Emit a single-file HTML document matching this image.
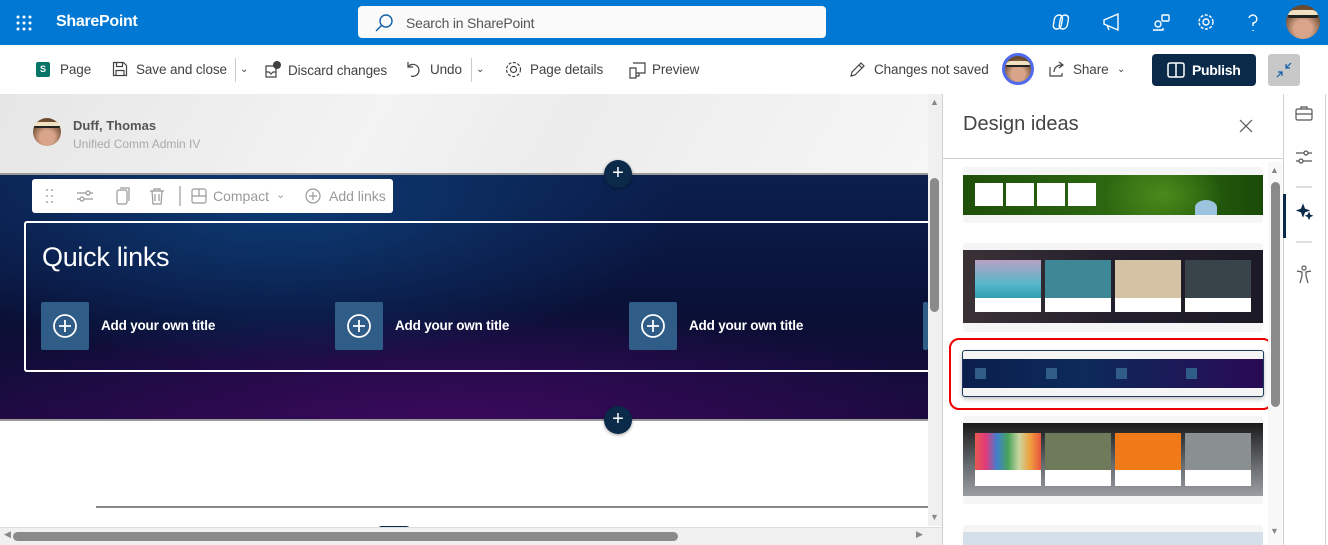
<!DOCTYPE html>
<html><head><meta charset="utf-8"><style>
*{box-sizing:border-box;margin:0;padding:0}
body{width:1328px;height:545px;overflow:hidden;font-family:"Liberation Sans",sans-serif;background:#fff;position:relative;color:#323130}
.abs{position:absolute}
.top{left:0;top:0;width:1328px;height:45px;background:#0078d4}
.tb{font-size:13.5px;color:#424242;top:62px;white-space:nowrap;letter-spacing:-0.1px}
.ico{stroke:#424242;fill:none;stroke-width:1.2}
.ql{width:48px;height:48px;background:#2f5d88;border-radius:2px}
.qlt{color:#fff;font-weight:bold;font-size:13.5px;letter-spacing:-0.2px}
.plus{width:28px;height:28px;border-radius:50%;background:#0b2a4a;color:#fff;text-align:center;line-height:27px;font-size:20px;box-shadow:0 1px 3px rgba(0,0,0,.4)}
.card{left:963px;width:300px;background:#f5f5f5;border-radius:3px}
.mini{background:#fff;position:absolute}
</style></head><body>
<div class="abs top"></div>
<svg class="abs" style="left:15px;top:14px" width="18" height="18"><g fill="#fff"><circle cx="3" cy="3" r="1.5"/><circle cx="9" cy="3" r="1.5"/><circle cx="15" cy="3" r="1.5"/><circle cx="3" cy="9" r="1.5"/><circle cx="9" cy="9" r="1.5"/><circle cx="15" cy="9" r="1.5"/><circle cx="3" cy="15" r="1.5"/><circle cx="9" cy="15" r="1.5"/><circle cx="15" cy="15" r="1.5"/></g></svg>
<div class="abs" style="left:56px;top:13px;color:#fff;font-weight:bold;font-size:16px;letter-spacing:-0.3px">SharePoint</div>
<div class="abs" style="left:358px;top:6px;width:468px;height:32px;background:#fafafa;border-radius:4px"></div>
<svg class="abs" style="left:374px;top:13px" width="20" height="20"><circle cx="12" cy="8" r="6" stroke="#0f5ea8" fill="none" stroke-width="1.4"/><path d="M8 12L2 18" stroke="#0f5ea8" stroke-width="1.4"/></svg>
<div class="abs" style="left:406px;top:15px;font-size:14px;color:#555;letter-spacing:-0.2px">Search in SharePoint</div>
<svg class="abs" style="left:1052px;top:10px" width="240" height="26" fill="none" stroke="#fff" stroke-width="1.4">
<rect x="4" y="5" width="8" height="14" rx="4" transform="skewX(-10)"/><rect x="10" y="5" width="8" height="14" rx="4" transform="skewX(-10)"/>
<path d="M52 10l14-6v16l-14-6zM52 10v4M55 15l2 5"/>
<circle cx="106" cy="14" r="3"/><rect x="110" y="5" width="7" height="6" rx="1"/><path d="M101 20h10v-2"/>
<circle cx="154" cy="12" r="3"/><circle cx="154" cy="12" r="7" stroke-dasharray="3 1.5"/>
<path d="M197 8a4 4 0 1 1 4 5v3M201 20v1"/>
</svg>
<div class="abs" style="left:1286px;top:5px;width:34px;height:34px;border-radius:50%;background:radial-gradient(circle at 50% 70%,#d9a58a 30%,#6b4a30 70%)"><div style="margin:5px 2px;height:8px;background:#f0e2c0;border-radius:6px 6px 2px 2px;border-bottom:3px solid #222"></div></div>

<!-- toolbar -->
<div class="abs" style="left:36px;top:62px;width:14px;height:15px;background:#077568;border-radius:2px;color:#fff;font-size:9px;font-weight:bold;text-align:center;line-height:15px">S</div>
<div class="abs tb" style="left:60px">Page</div>
<svg class="abs" style="left:112px;top:61px" width="16" height="16"><path class="ico" d="M1.5 1.5h10l3 3v10h-13zM4.5 1.5v4h6v-4M4 14.5v-5h8v5"/></svg>
<div class="abs tb" style="left:136px">Save and close</div>
<div class="abs" style="left:235px;top:58px;width:1px;height:24px;background:#ccc"></div>
<div class="abs tb" style="left:240px;font-size:10px;top:64px">⌄</div>
<svg class="abs" style="left:264px;top:60px" width="18" height="18"><path class="ico" d="M2 6h10v11h-10zM2 12h3l2 2 2-2h3"/><circle cx="13" cy="5" r="4" fill="#424242"/></svg>
<div class="abs tb" style="left:288px;top:63px">Discard changes</div>
<svg class="abs" style="left:405px;top:60px" width="18" height="18"><path class="ico" d="M3 2v5h5M3 7a6 6 0 1 1 3 9"/></svg>
<div class="abs tb" style="left:430px">Undo</div>
<div class="abs" style="left:471px;top:58px;width:1px;height:24px;background:#ccc"></div>
<div class="abs tb" style="left:476px;font-size:10px;top:64px">⌄</div>
<svg class="abs" style="left:505px;top:61px" width="17" height="17"><circle class="ico" cx="8.5" cy="8.5" r="3"/><circle class="ico" cx="8.5" cy="8.5" r="7" stroke-dasharray="3 1.6"/></svg>
<div class="abs tb" style="left:530px">Page details</div>
<svg class="abs" style="left:629px;top:61px" width="18" height="18"><path class="ico" d="M4 2h12v10h-9M1 7h6v10h-6zM10 12v3h-3"/></svg>
<div class="abs tb" style="left:652px">Preview</div>
<svg class="abs" style="left:848px;top:60px" width="18" height="18"><path class="ico" d="M3 16l1-4 9-9 3 3-9 9zM11 5l3 3"/></svg>
<div class="abs tb" style="left:874px">Changes not saved</div>
<div class="abs" style="left:1002px;top:53px;width:32px;height:32px;border-radius:50%;border:3px solid #4f6bed;background:radial-gradient(circle at 50% 70%,#d9a58a 30%,#6b4a30 70%)"><div style="margin:5px 1px;height:6px;background:#f0e2c0;border-radius:5px 5px 2px 2px;border-bottom:2px solid #222"></div></div>
<svg class="abs" style="left:1048px;top:60px" width="18" height="18"><path class="ico" d="M2 7v9h12v-3M6 12c0-5 4-7 8-7M11 2l4 3-4 3"/></svg>
<div class="abs tb" style="left:1073px">Share</div>
<div class="abs tb" style="left:1117px;font-size:10px;top:64px">⌄</div>
<div class="abs" style="left:1152px;top:54px;width:104px;height:32px;background:#0b2a4a;border-radius:4px;color:#fff;font-weight:bold;font-size:14px;line-height:32px;padding-left:40px;letter-spacing:-0.3px">Publish</div>
<svg class="abs" style="left:1167px;top:62px" width="18" height="16"><rect x="1" y="1" width="16" height="14" rx="2" stroke="#fff" fill="none" stroke-width="1.5"/><path d="M9 1v14" stroke="#fff" stroke-width="1.5"/></svg>
<div class="abs" style="left:1268px;top:54px;width:32px;height:32px;background:#c8c8c8;border-radius:3px"></div>
<svg class="abs" style="left:1276px;top:62px" width="16" height="16" stroke="#0f5ea8" fill="none" stroke-width="1.2"><path d="M15 1l-5 5M10 2v4h4M1 15l5-5M2 10h4v4"/></svg>

<!-- canvas -->
<div class="abs" style="left:0;top:94px;width:928px;height:80px;background:linear-gradient(120deg,#e6e6e6,#f3f3f3 40%,#ececec 60%,#f6f6f6)"></div>
<div class="abs" style="left:33px;top:118px;width:28px;height:28px;border-radius:50%;background:radial-gradient(circle at 50% 70%,#d9a58a 30%,#6b4a30 70%)"><div style="margin:4px 1px;height:6px;background:#f0e2c0;border-radius:5px 5px 2px 2px;border-bottom:2px solid #222"></div></div>
<div class="abs" style="left:73px;top:118px;font-size:13px;font-weight:bold;color:#555">Duff, Thomas</div>
<div class="abs" style="left:73px;top:137px;font-size:12px;color:#aaa">Unified Comm Admin IV</div>
<div class="abs" style="left:0;top:173px;width:928px;height:2px;background:#999"></div>
<div class="abs" style="left:0;top:175px;width:928px;height:244px;background:radial-gradient(ellipse 400px 160px at 280px 30px,#0c3a72,transparent),radial-gradient(ellipse 500px 120px at 450px 250px,#3a0a5c,transparent),linear-gradient(180deg,#0b1f4d,#0a0f35 60%,#1d0a40)"></div>
<div class="abs" style="left:0;top:419px;width:928px;height:2px;background:#999"></div>
<div class="abs" style="left:32px;top:179px;width:361px;height:34px;background:#fff;border-radius:3px"></div>
<svg class="abs" style="left:40px;top:186px" width="350" height="20" fill="none" stroke="#999" stroke-width="1.2">
<g fill="#aaa" stroke="none"><circle cx="7" cy="4" r="1"/><circle cx="12" cy="4" r="1"/><circle cx="7" cy="10" r="1"/><circle cx="12" cy="10" r="1"/><circle cx="7" cy="16" r="1"/><circle cx="12" cy="16" r="1"/></g>
<path d="M37 7h16M37 13h16"/><circle cx="48" cy="7" r="2" fill="#fff"/><circle cx="42" cy="13" r="2" fill="#fff"/>
<rect x="77" y="4" width="10" height="14" rx="2"/><path d="M80 2h9v13"/>
<path d="M110 5h14M114 5v-2h6v2M112 5l1 13h8l1-13M115 8v7M119 8v7"/>
<path d="M140 -6v34"/>
<rect x="152" y="3" width="14" height="14" rx="2"/><path d="M152 10h14M159 3v7"/>
<circle cx="273" cy="10" r="7"/><path d="M273 6v8M269 10h8"/>
</svg>
<div class="abs" style="left:213px;top:188px;font-size:14px;color:#999">Compact</div>
<div class="abs" style="left:276px;top:188px;font-size:11px;color:#999">⌄</div>
<div class="abs" style="left:329px;top:188px;font-size:14px;color:#999">Add links</div>
<div class="abs" style="left:24px;top:221px;width:910px;height:151px;border:2px solid #fff;border-right:none;border-radius:3px 0 0 3px"></div>
<div class="abs" style="left:42px;top:242px;color:#fff;font-size:27px;letter-spacing:-0.3px">Quick links</div>
<div class="abs ql" style="left:41px;top:302px"></div>
<div class="abs ql" style="left:335px;top:302px"></div>
<div class="abs ql" style="left:629px;top:302px"></div>
<div class="abs ql" style="left:923px;top:302px;width:5px"></div>
<svg class="abs" style="left:41px;top:302px" width="650" height="48" fill="none" stroke="#fff" stroke-width="1.8"><g id="p"><circle cx="24" cy="24" r="11"/><path d="M24 18v12M18 24h12"/></g><use href="#p" x="294"/><use href="#p" x="588"/></svg>
<div class="abs qlt" style="left:101px;top:318px">Add your own title</div>
<div class="abs qlt" style="left:395px;top:318px">Add your own title</div>
<div class="abs qlt" style="left:689px;top:318px">Add your own title</div>
<div class="abs plus" style="left:604px;top:160px">+</div>
<div class="abs plus" style="left:604px;top:406px">+</div>
<div class="abs" style="left:96px;top:506px;width:832px;height:2px;background:#888"></div>
<div class="abs" style="left:376px;top:526px;width:36px;height:6px;background:#0b2a4a;border-radius:6px 6px 0 0"></div>
<!-- scrollbars -->
<div class="abs" style="left:928px;top:94px;width:14px;height:432px;background:#f0f0f0"></div>
<div class="abs" style="left:930px;top:178px;width:9px;height:134px;background:#8a8a8a;border-radius:5px"></div>
<div class="abs" style="left:930px;top:97px;color:#888;font-size:9px">▲</div>
<div class="abs" style="left:930px;top:512px;color:#888;font-size:9px">▼</div>
<div class="abs" style="left:0;top:527px;width:942px;height:18px;background:#f0f0f0;border-top:1px solid #ddd"></div>
<div class="abs" style="left:13px;top:532px;width:665px;height:9px;background:#8a8a8a;border-radius:5px"></div>
<div class="abs" style="left:4px;top:529px;color:#888;font-size:9px">◀</div>
<div class="abs" style="left:916px;top:529px;color:#888;font-size:9px">▶</div>

<!-- panel -->
<div class="abs" style="left:942px;top:94px;width:1px;height:451px;background:#d0d0d0"></div>
<div class="abs" style="left:963px;top:113px;font-size:20px;color:#444">Design ideas</div>
<svg class="abs" style="left:1239px;top:119px" width="14" height="14"><path d="M1 1l12 12M13 1L1 13" stroke="#555" stroke-width="1.2"/></svg>
<div class="abs" style="left:943px;top:158px;width:340px;height:1px;background:#d0d0d0"></div>
<div class="abs card" style="top:167px;height:56px"></div>
<div class="abs" style="left:963px;top:175px;width:300px;height:40px;background:radial-gradient(ellipse 60px 40px at 200px 20px,#4a8a1a,transparent),linear-gradient(90deg,#1f4f0a,#2f6d12 60%,#1a4a08)"></div>
<div class="mini" style="left:975px;top:183px;width:28px;height:23px"></div>
<div class="mini" style="left:1006px;top:183px;width:28px;height:23px"></div>
<div class="mini" style="left:1037px;top:183px;width:28px;height:23px"></div>
<div class="mini" style="left:1068px;top:183px;width:28px;height:23px"></div>
<div class="abs" style="left:1195px;top:200px;width:22px;height:15px;border-radius:50% 50% 0 0;background:#9cc3dd"></div>
<div class="abs card" style="top:243px;height:89px"></div>
<div class="abs" style="left:963px;top:250px;width:300px;height:73px;background:linear-gradient(90deg,#3b3237,#241f2c 50%,#1c1a26)"></div>
<div class="mini" style="left:975px;top:260px;width:66px;height:52px;background:linear-gradient(#b9a0c4,#58b7c9 45%,#2f9fb0 73%,#fff 73%)"></div>
<div class="mini" style="left:1045px;top:260px;width:66px;height:52px;background:linear-gradient(#3d8797 73%,#fff 73%)"></div>
<div class="mini" style="left:1115px;top:260px;width:66px;height:52px;background:linear-gradient(#d5c2a4 73%,#fff 73%)"></div>
<div class="mini" style="left:1185px;top:260px;width:66px;height:52px;background:linear-gradient(#39444a 73%,#fff 73%)"></div>
<div class="abs" style="left:949px;top:338px;width:324px;height:72px;border:2px solid #e00;border-radius:10px"></div>
<div class="abs" style="left:962px;top:350px;width:302px;height:47px;border:1.5px solid #1d3a5c;border-radius:3px;background:#f5f5f5;box-shadow:0 2px 5px rgba(0,0,0,.25)"></div>
<div class="abs" style="left:963px;top:359px;width:300px;height:29px;background:linear-gradient(90deg,#0b1f4d,#0c2a5a 40%,#2a0a55)"></div>
<div class="abs" style="left:975px;top:368px;width:11px;height:11px;background:#2f5d88"></div>
<div class="abs" style="left:1046px;top:368px;width:11px;height:11px;background:#2f5d88"></div>
<div class="abs" style="left:1116px;top:368px;width:11px;height:11px;background:#2f5d88"></div>
<div class="abs" style="left:1186px;top:368px;width:11px;height:11px;background:#2f5d88"></div>
<div class="abs card" style="top:416px;height:88px"></div>
<div class="abs" style="left:963px;top:423px;width:300px;height:73px;background:linear-gradient(#1a1a1a,#6a6e72 60%,#9a9ea2)"></div>
<div class="mini" style="left:975px;top:433px;width:66px;height:53px;background:linear-gradient(#fff,#fff) 0 37px/100% 16px no-repeat,linear-gradient(90deg,#e85a4f,#e13a7c,#3f7fd0,#4aa35a,#c8d6a0,#f0a040,#e8553f)"></div>
<div class="mini" style="left:1045px;top:433px;width:66px;height:53px;background:linear-gradient(#6e7a5a 70%,#fff 70%)"></div>
<div class="mini" style="left:1115px;top:433px;width:66px;height:53px;background:linear-gradient(#f07a18 70%,#fff 70%)"></div>
<div class="mini" style="left:1185px;top:433px;width:66px;height:53px;background:linear-gradient(#8a9090 70%,#fff 70%)"></div>
<div class="abs card" style="top:525px;height:20px"></div>
<div class="abs" style="left:963px;top:532px;width:300px;height:13px;background:#d4dfea"></div>
<div class="abs" style="left:1268px;top:162px;width:14px;height:383px;background:#f8f8f8"></div>
<div class="abs" style="left:1271px;top:182px;width:9px;height:225px;background:#8a8a8a;border-radius:5px"></div>
<div class="abs" style="left:1270px;top:165px;color:#888;font-size:9px">▲</div>
<div class="abs" style="left:1270px;top:526px;color:#888;font-size:9px">▼</div>
<!-- rail -->
<div class="abs" style="left:1283px;top:94px;width:1px;height:451px;background:#d0d0d0"></div>
<div class="abs" style="left:1325px;top:94px;width:1px;height:451px;background:#d0d0d0"></div>
<svg class="abs" style="left:1295px;top:105px" width="20" height="180" fill="none" stroke="#555" stroke-width="1.2">
<rect x="1" y="4" width="16" height="11" rx="1.5"/><path d="M6 4V2h6v2M1 9h16"/>
<path d="M1 48h16M1 56h16"/><circle cx="11" cy="48" r="2" fill="#fff"/><circle cx="6" cy="56" r="2" fill="#fff"/>
<path d="M1 82h16" stroke="#ccc"/>
<path d="M8 100l1.5 4 4 1.5-4 1.5-1.5 4-1.5-4-4-1.5 4-1.5zM14 108l.8 2 2 .8-2 .8-.8 2-.8-2-2-.8 2-.8z" fill="#0b2a4a" stroke="#0b2a4a"/>
<path d="M1 137h16" stroke="#ccc"/>
<circle cx="9" cy="163" r="2"/><path d="M2 166l5 1v4l-2 7M16 166l-5 1v4l2 7"/>
</svg>
<div class="abs" style="left:1283px;top:194px;width:3px;height:44px;background:#0b2a4a"></div>
</body></html>
